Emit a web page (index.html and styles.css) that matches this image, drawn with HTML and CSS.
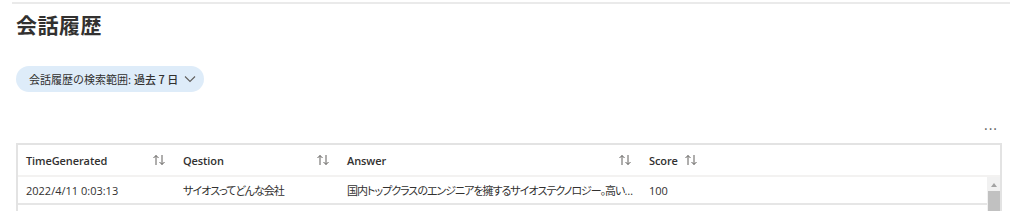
FILE: index.html
```html
<!DOCTYPE html>
<html lang="ja">
<head>
<meta charset="utf-8">
<link rel="stylesheet" href="styles.css">
</head>
<body>
<div class="topline"></div>
<h1 class="title">会話履歴</h1>
<div class="filter">
  <span class="pill">会話履歴の検索範囲: <b>過去 7 日</b>
    <svg class="chev" width="12" height="8" viewBox="0 0 12 8"><path d="M1 1.5 L6 6.5 L11 1.5" fill="none" stroke="#605e5c" stroke-width="1.1"/></svg>
  </span>
</div>
<div class="more">···</div>
<div class="table">
  <div class="head">
    <div class="hcell"><span>TimeGenerated</span><svg class="sort" width="14" height="12" viewBox="0 0 14 12"><path d="M4 11V1.5M1.5 4L4 1.5L6.5 4M10 1v9.5M7.5 8L10 10.5L12.5 8" fill="none" stroke="#605e5c" stroke-width="1"/></svg></div>
    <div class="hcell"><span>Qestion</span><svg class="sort" width="14" height="12" viewBox="0 0 14 12"><path d="M4 11V1.5M1.5 4L4 1.5L6.5 4M10 1v9.5M7.5 8L10 10.5L12.5 8" fill="none" stroke="#605e5c" stroke-width="1"/></svg></div>
    <div class="hcell"><span>Answer</span><svg class="sort" width="14" height="12" viewBox="0 0 14 12"><path d="M4 11V1.5M1.5 4L4 1.5L6.5 4M10 1v9.5M7.5 8L10 10.5L12.5 8" fill="none" stroke="#605e5c" stroke-width="1"/></svg></div>
    <div class="hcell last"><span>Score</span><svg class="sort" width="14" height="12" viewBox="0 0 14 12"><path d="M4 11V1.5M1.5 4L4 1.5L6.5 4M10 1v9.5M7.5 8L10 10.5L12.5 8" fill="none" stroke="#605e5c" stroke-width="1"/></svg></div>
  </div>
  <div class="body">
    <div class="rows">
      <div class="row">
        <div class="cell">2022/4/11 0:03:13</div>
        <div class="cell jp">サイオスってどんな会社</div>
        <div class="cell jp ellip">国内トップクラスのエンジニアを擁するサイオステクノロジー。高いレベルの技術力で</div>
        <div class="cell">100</div>
      </div>
    </div>
    <div class="scrollbar">
      <div class="sb-up"></div>
      <div class="sb-thumb"></div>
    </div>
  </div>
</div>
</body>
</html>
```
FILE: styles.css
```css
html, body {
  margin: 0;
  padding: 0;
  background: #ffffff;
  overflow: hidden;
}
body {
  font-family: "Open Sans", "Noto Sans CJK JP", sans-serif;
  color: #323130;
  width: 1024px;
  height: 211px;
}
.topline {
  margin: 2px 14px 0 12px;
  height: 2px;
  background: #eaeaea;
}
.title {
  margin: 5px 0 0 16px;
  font-family: "Noto Sans CJK JP", sans-serif;
  font-size: 21px;
  font-weight: 700;
  line-height: 30px;
  color: #323130;
  letter-spacing: 0.5px;
}
.filter {
  margin: 27px 0 0 16px;
  height: 26px;
  display: flex;
}
.pill {
  display: inline-flex;
  align-items: center;
  height: 26px;
  padding: 0 8px 0 13px;
  border-radius: 13px;
  background: #deecf9;
  font-family: "Noto Sans CJK JP", sans-serif;
  font-size: 11px;
  color: #323130;
  white-space: nowrap;
}
.pill b {
  font-weight: 500;
  margin-left: 3px;
}
.chev {
  margin-left: 6px;
}
.more {
  margin: 32px 0 0 0;
  padding-right: 26px;
  text-align: right;
  height: 14px;
  line-height: 10px;
  font-size: 14px;
  letter-spacing: 1px;
  color: #605e5c;
}
.table {
  margin: 5px 0 0 16px;
  width: 986px;
  border: 2px solid #e3e3e3;
  box-sizing: border-box;
  border-bottom: none;
  font-size: 11px;
}
.head {
  display: grid;
  grid-template-columns: 157px 164px 302px 1fr;
  height: 30px;
  border-bottom: 2px solid #f3f2f1;
  font-weight: 600;
  letter-spacing: -0.1px;
}
.hcell {
  display: flex;
  align-items: center;
  justify-content: space-between;
  padding: 0 9px 0 8px;
}
.hcell.last {
  justify-content: flex-start;
}
.hcell.last .sort {
  margin-left: 6px;
}
.sort {
  flex: none;
}
.body {
  display: flex;
  height: 40px;
}
.rows {
  flex: 1;
  min-width: 0;
}
.row {
  display: grid;
  grid-template-columns: 157px 164px 302px 1fr;
  height: 26px;
  border-bottom: 2px solid #e6e6e6;
  align-items: center;
}
.cell {
  padding: 0 0 0 8px;
  white-space: nowrap;
  overflow: hidden;
  min-width: 0;
}
.cell.jp {
  font-feature-settings: "palt";
  letter-spacing: -1px;
}
.cell.ellip {
  text-overflow: ellipsis;
  padding-right: 4px;
}
.scrollbar {
  width: 13px;
  background: #f1f1f1;
  display: flex;
  flex-direction: column;
  align-items: center;
}
.sb-up {
  margin-top: 6px;
  width: 0;
  height: 0;
  border-left: 3px solid transparent;
  border-right: 3px solid transparent;
  border-bottom: 4px solid #a3a3a3;
}
.sb-thumb {
  margin-top: 4px;
  width: 12px;
  flex: 1;
  background: #c1c1c1;
}
```
